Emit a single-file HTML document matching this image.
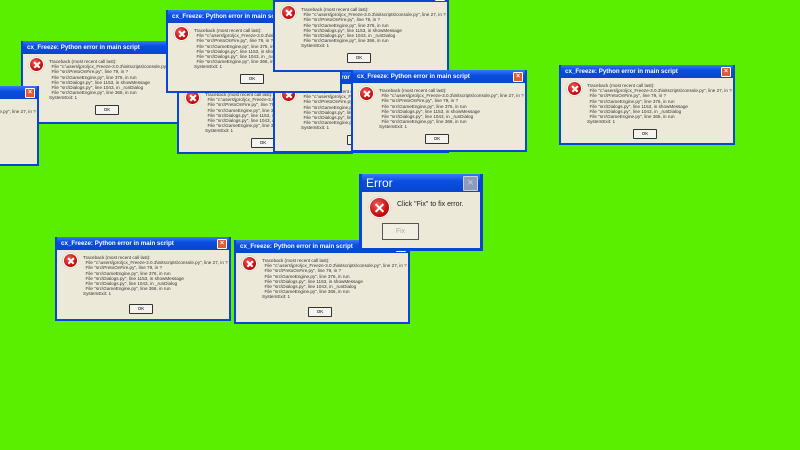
<!DOCTYPE html>
<html><head><meta charset="utf-8"><style>
*{margin:0;padding:0}
html,body{width:800px;height:450px;overflow:hidden}
body{background:#5aef00;font-family:"Liberation Sans",sans-serif}
#w{position:absolute;left:0;top:0;width:800px;height:450px;overflow:hidden}
.d{position:absolute;width:176px;height:82px;background:#ece9d8;border:2px solid #0846d6;border-top:none;box-sizing:border-box;overflow:hidden}
.t{height:13px;background:linear-gradient(#3a7af4,#0a4ee0 40%,#0848d4 80%,#0a46c8);color:#fff;font-weight:bold;font-size:6.2px;line-height:13px;padding-left:4px;position:relative;white-space:nowrap}
.x{position:absolute;right:2px;top:2px;width:8px;height:8px;background:#e05a34;border:1px solid #fff;border-radius:1px;color:#fff;font-size:7px;line-height:8px;text-align:center}
.i{position:absolute;left:6px;top:16px;width:13px;height:13px;border-radius:50%;background:radial-gradient(circle at 40% 35%,#f06060,#c80e0e 60%,#900);border:1px solid #fff;box-shadow:0 0 1px #888}
.i:before,.i:after{content:"";position:absolute;left:2.5px;top:5.8px;width:8px;height:1.6px;background:#fff;transform:rotate(45deg)}
.i:after{transform:rotate(-45deg)}
.b{position:absolute;left:26px;top:18px;font-size:4.6px;line-height:5.2px;color:#333;white-space:pre}
.ok{position:absolute;left:72px;top:64px;width:22px;height:8px;border:1px solid #333;border-radius:1px;background:#f4f3ee;font-size:4.5px;line-height:8px;text-align:center;color:#000}
.e .i:before,.e .i:after{left:4px;top:8.7px;width:11px;height:2px}
</style></head><body><div id="w">

<div class="d" style="left:21px;top:41px;height:83px"><div class="t">cx_Freeze: Python error in main script<div class="x">×</div></div><div class="i"></div><div class="b">Traceback (most recent call last):
  File "c:\users\jpro\jcx_Freeze-3.0.3\initscripts\console.py", line 27, in ?
  File "src\PretoOnFire.py", line 79, in ?
  File "src\GameEngine.py", line 376, in run
  File "src\Dialogs.py", line 1153, in showMessage
  File "src\Dialogs.py", line 1043, in _runDialog
  File "src\GameEngine.py", line 366, in run
SystemExit: 1</div><div class="ok">OK</div></div>

<div class="d" style="left:-137px;top:86px;height:80px"><div class="t">cx_Freeze: Python error in main script<div class="x">×</div></div><div class="i"></div><div class="b">Traceback (most recent call last):
  File "c:\users\jpro\jcx_Freeze-3.0.3\initscripts\console.py", line 27, in ?
  File "src\PretoOnFire.py", line 79, in ?
  File "src\GameEngine.py", line 376, in run
  File "src\Dialogs.py", line 1153, in showMessage
  File "src\Dialogs.py", line 1043, in _runDialog
  File "src\GameEngine.py", line 366, in run
SystemExit: 1</div><div class="ok">OK</div></div>

<div class="d" style="left:177px;top:74px;height:80px"><div class="t">cx_Freeze: Python error in main script<div class="x">×</div></div><div class="i"></div><div class="b">Traceback (most recent call last):
  File "c:\users\jpro\jcx_Freeze-3.0.3\initscripts\console.py", line 27, in ?
  File "src\PretoOnFire.py", line 79, in ?
  File "src\GameEngine.py", line 376, in run
  File "src\Dialogs.py", line 1153, in showMessage
  File "src\Dialogs.py", line 1043, in _runDialog
  File "src\GameEngine.py", line 366, in run
SystemExit: 1</div><div class="ok">OK</div></div>

<div class="d" style="left:273px;top:71px;height:82px"><div class="t">cx_Freeze: Python error in main script<div class="x">×</div></div><div class="i"></div><div class="b">Traceback (most recent call last):
  File "c:\users\jpro\jcx_Freeze-3.0.3\initscripts\console.py", line 27, in ?
  File "src\PretoOnFire.py", line 79, in ?
  File "src\GameEngine.py", line 376, in run
  File "src\Dialogs.py", line 1153, in showMessage
  File "src\Dialogs.py", line 1043, in _runDialog
  File "src\GameEngine.py", line 366, in run
SystemExit: 1</div><div class="ok">OK</div></div>

<div class="d" style="left:166px;top:10px;height:83px"><div class="t">cx_Freeze: Python error in main script<div class="x">×</div></div><div class="i"></div><div class="b">Traceback (most recent call last):
  File "c:\users\jpro\jcx_Freeze-3.0.3\initscripts\console.py", line 27, in ?
  File "src\PretoOnFire.py", line 79, in ?
  File "src\GameEngine.py", line 376, in run
  File "src\Dialogs.py", line 1153, in showMessage
  File "src\Dialogs.py", line 1043, in _runDialog
  File "src\GameEngine.py", line 366, in run
SystemExit: 1</div><div class="ok">OK</div></div>

<div class="d" style="left:273px;top:-11px;height:83px"><div class="t">cx_Freeze: Python error in main script<div class="x">×</div></div><div class="i"></div><div class="b">Traceback (most recent call last):
  File "c:\users\jpro\jcx_Freeze-3.0.3\initscripts\console.py", line 27, in ?
  File "src\PretoOnFire.py", line 79, in ?
  File "src\GameEngine.py", line 376, in run
  File "src\Dialogs.py", line 1153, in showMessage
  File "src\Dialogs.py", line 1043, in _runDialog
  File "src\GameEngine.py", line 366, in run
SystemExit: 1</div><div class="ok">OK</div></div>

<div class="d" style="left:351px;top:70px;height:82px"><div class="t">cx_Freeze: Python error in main script<div class="x">×</div></div><div class="i"></div><div class="b">Traceback (most recent call last):
  File "c:\users\jpro\jcx_Freeze-3.0.3\initscripts\console.py", line 27, in ?
  File "src\PretoOnFire.py", line 79, in ?
  File "src\GameEngine.py", line 376, in run
  File "src\Dialogs.py", line 1153, in showMessage
  File "src\Dialogs.py", line 1043, in _runDialog
  File "src\GameEngine.py", line 366, in run
SystemExit: 1</div><div class="ok">OK</div></div>

<div class="d" style="left:559px;top:65px;height:80px"><div class="t">cx_Freeze: Python error in main script<div class="x">×</div></div><div class="i"></div><div class="b">Traceback (most recent call last):
  File "c:\users\jpro\jcx_Freeze-3.0.3\initscripts\console.py", line 27, in ?
  File "src\PretoOnFire.py", line 79, in ?
  File "src\GameEngine.py", line 376, in run
  File "src\Dialogs.py", line 1153, in showMessage
  File "src\Dialogs.py", line 1043, in _runDialog
  File "src\GameEngine.py", line 366, in run
SystemExit: 1</div><div class="ok">OK</div></div>

<div class="d" style="left:55px;top:237px;height:84px"><div class="t">cx_Freeze: Python error in main script<div class="x">×</div></div><div class="i"></div><div class="b">Traceback (most recent call last):
  File "c:\users\jpro\jcx_Freeze-3.0.3\initscripts\console.py", line 27, in ?
  File "src\PretoOnFire.py", line 79, in ?
  File "src\GameEngine.py", line 376, in run
  File "src\Dialogs.py", line 1153, in showMessage
  File "src\Dialogs.py", line 1043, in _runDialog
  File "src\GameEngine.py", line 366, in run
SystemExit: 1</div><div class="ok" style="top:67px">OK</div></div>

<div class="d" style="left:234px;top:240px;height:84px"><div class="t">cx_Freeze: Python error in main script<div class="x">×</div></div><div class="i"></div><div class="b">Traceback (most recent call last):
  File "c:\users\jpro\jcx_Freeze-3.0.3\initscripts\console.py", line 27, in ?
  File "src\PretoOnFire.py", line 79, in ?
  File "src\GameEngine.py", line 376, in run
  File "src\Dialogs.py", line 1153, in showMessage
  File "src\Dialogs.py", line 1043, in _runDialog
  File "src\GameEngine.py", line 366, in run
SystemExit: 1</div><div class="ok" style="top:67px">OK</div></div>

<div class="d e" style="left:359px;top:174px;width:124px;height:77px;border-width:3px">
 <div class="t" style="height:18px;line-height:18px;font-size:12px;font-weight:normal;padding-left:4px;margin:0">Error<div class="x" style="width:13px;height:13px;top:2px;right:2px;background:#8f9ab8;border-color:#c8d0e0;color:#c8d0e0;font-size:11px;line-height:13px">×</div></div>
 <div class="i" style="left:7px;top:23px;width:19px;height:19px"></div>
 <div style="position:absolute;left:35px;top:27px;font-size:7px;color:#222;white-space:nowrap">Click "Fix" to fix error.</div>
 <div style="position:absolute;left:20px;top:49px;width:35px;height:15px;border:1px solid #555;background:#f1efe4;color:#aaa;font-size:7px;line-height:15px;text-align:center">Fix</div>
</div>
</div></body></html>
